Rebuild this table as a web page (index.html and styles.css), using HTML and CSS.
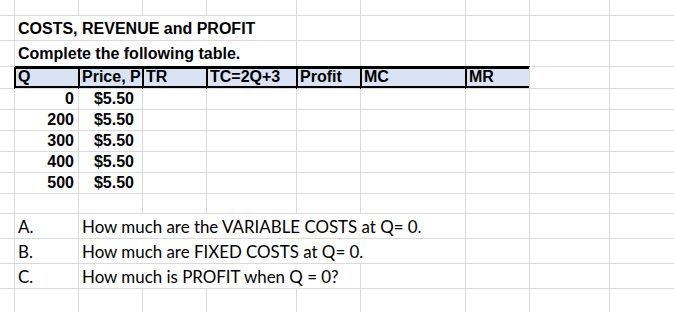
FILE: index.html
```html
<!DOCTYPE html>
<html>
<head>
<meta charset="utf-8">
<link rel="stylesheet" href="styles.css">
</head>
<body>
<div class="sheet">
  <!-- row 0 -->
  <div class="c"></div><div class="c"></div><div class="c"></div><div class="c"></div><div class="c"></div>
  <div class="c"></div><div class="c"></div><div class="c"></div><div class="c"></div><div class="c"></div>
  <!-- row 1 -->
  <div class="c"></div>
  <div class="c bold title span4">COSTS, REVENUE and PROFIT</div>
  <div class="c"></div><div class="c"></div><div class="c"></div><div class="c"></div><div class="c"></div>
  <!-- row 2 -->
  <div class="c"></div>
  <div class="c bold sub span4">Complete the following table.</div>
  <div class="c"></div><div class="c"></div><div class="c"></div><div class="c"></div><div class="c"></div>
  <!-- row 3 header -->
  <div class="c"></div>
  <div class="c bold hd first">Q</div>
  <div class="c bold hd">Price, P</div>
  <div class="c bold hd">TR</div>
  <div class="c bold hd">TC=2Q+3</div>
  <div class="c bold hd">Profit</div>
  <div class="c bold hd">MC</div>
  <div class="c bold hd last">MR</div>
  <div class="c"></div><div class="c"></div>
  <!-- data rows -->
  <div class="c"></div><div class="c bold num">0</div><div class="c bold price">$5.50</div>
  <div class="c"></div><div class="c"></div><div class="c"></div><div class="c"></div><div class="c"></div><div class="c"></div><div class="c"></div>
  <div class="c"></div><div class="c bold num">200</div><div class="c bold price">$5.50</div>
  <div class="c"></div><div class="c"></div><div class="c"></div><div class="c"></div><div class="c"></div><div class="c"></div><div class="c"></div>
  <div class="c"></div><div class="c bold num">300</div><div class="c bold price">$5.50</div>
  <div class="c"></div><div class="c"></div><div class="c"></div><div class="c"></div><div class="c"></div><div class="c"></div><div class="c"></div>
  <div class="c"></div><div class="c bold num">400</div><div class="c bold price">$5.50</div>
  <div class="c"></div><div class="c"></div><div class="c"></div><div class="c"></div><div class="c"></div><div class="c"></div><div class="c"></div>
  <div class="c"></div><div class="c bold num">500</div><div class="c bold price">$5.50</div>
  <div class="c"></div><div class="c"></div><div class="c"></div><div class="c"></div><div class="c"></div><div class="c"></div><div class="c"></div>
  <!-- row 9 -->
  <div class="c"></div><div class="c"></div><div class="c"></div><div class="c"></div><div class="c"></div>
  <div class="c"></div><div class="c"></div><div class="c"></div><div class="c"></div><div class="c"></div>
  <!-- questions -->
  <div class="c"></div><div class="c q">A.</div>
  <div class="c q qt span5">How much are the VARIABLE COSTS at Q= 0.</div>
  <div class="c"></div><div class="c"></div><div class="c"></div>
  <div class="c"></div><div class="c q">B.</div>
  <div class="c q qt span5">How much are FIXED COSTS at Q= 0.</div>
  <div class="c"></div><div class="c"></div><div class="c"></div>
  <div class="c"></div><div class="c q">C.</div>
  <div class="c q qt span4">How much is PROFIT when Q = 0?</div>
  <div class="c"></div><div class="c"></div><div class="c"></div><div class="c"></div>
  <!-- row 13 -->
  <div class="c"></div><div class="c"></div><div class="c"></div><div class="c"></div><div class="c"></div>
  <div class="c"></div><div class="c"></div><div class="c"></div><div class="c"></div><div class="c"></div>
</div>
</body>
</html>
```
FILE: styles.css
```css
html, body {
  margin: 0;
  padding: 0;
  background: #ffffff;
}

.sheet {
  display: grid;
  grid-template-columns: 15px 64px 64px 64px 90px 64px 105px 64px 80px 80px;
  grid-template-rows: 16px 25px 26px 22px 21px 21px 21px 21px 21px 20px 25px 25px 25px 24px;
  width: 674px;
  height: 312px;
  overflow: hidden;
  font-family: "Liberation Sans", Arial, sans-serif;
  font-size: 16px;
  color: #000;
}

.c {
  box-sizing: border-box;
  border-right: 1px solid #dadada;
  border-bottom: 1px solid #dadada;
  display: flex;
  align-items: flex-end;
  white-space: nowrap;
  overflow: hidden;
  line-height: 1;
  padding-left: 3px;
  padding-bottom: 2px;
}

.bold {
  font-weight: bold;
}

.span4 {
  grid-column: span 4;
}

.span5 {
  grid-column: span 5;
}

.title {
  padding-bottom: 3px;
}

.sub {
  padding-bottom: 4px;
}

.hd {
  background: #dae3f3;
  padding-bottom: 3px;
  box-shadow: inset 1px 0 #000, -1px 0 #000, inset 0 2px #000, 0 -1px #000, inset 0 -2px #000;
}

.num {
  justify-content: flex-end;
  padding-right: 4px;
}

.price {
  justify-content: flex-end;
  padding-right: 8px;
}

.q {
  font-family: Lato, "Open Sans", sans-serif;
  font-size: 16.9px;
  padding-bottom: 2px;
}

.qt {
  padding-left: 3px;
}
```
